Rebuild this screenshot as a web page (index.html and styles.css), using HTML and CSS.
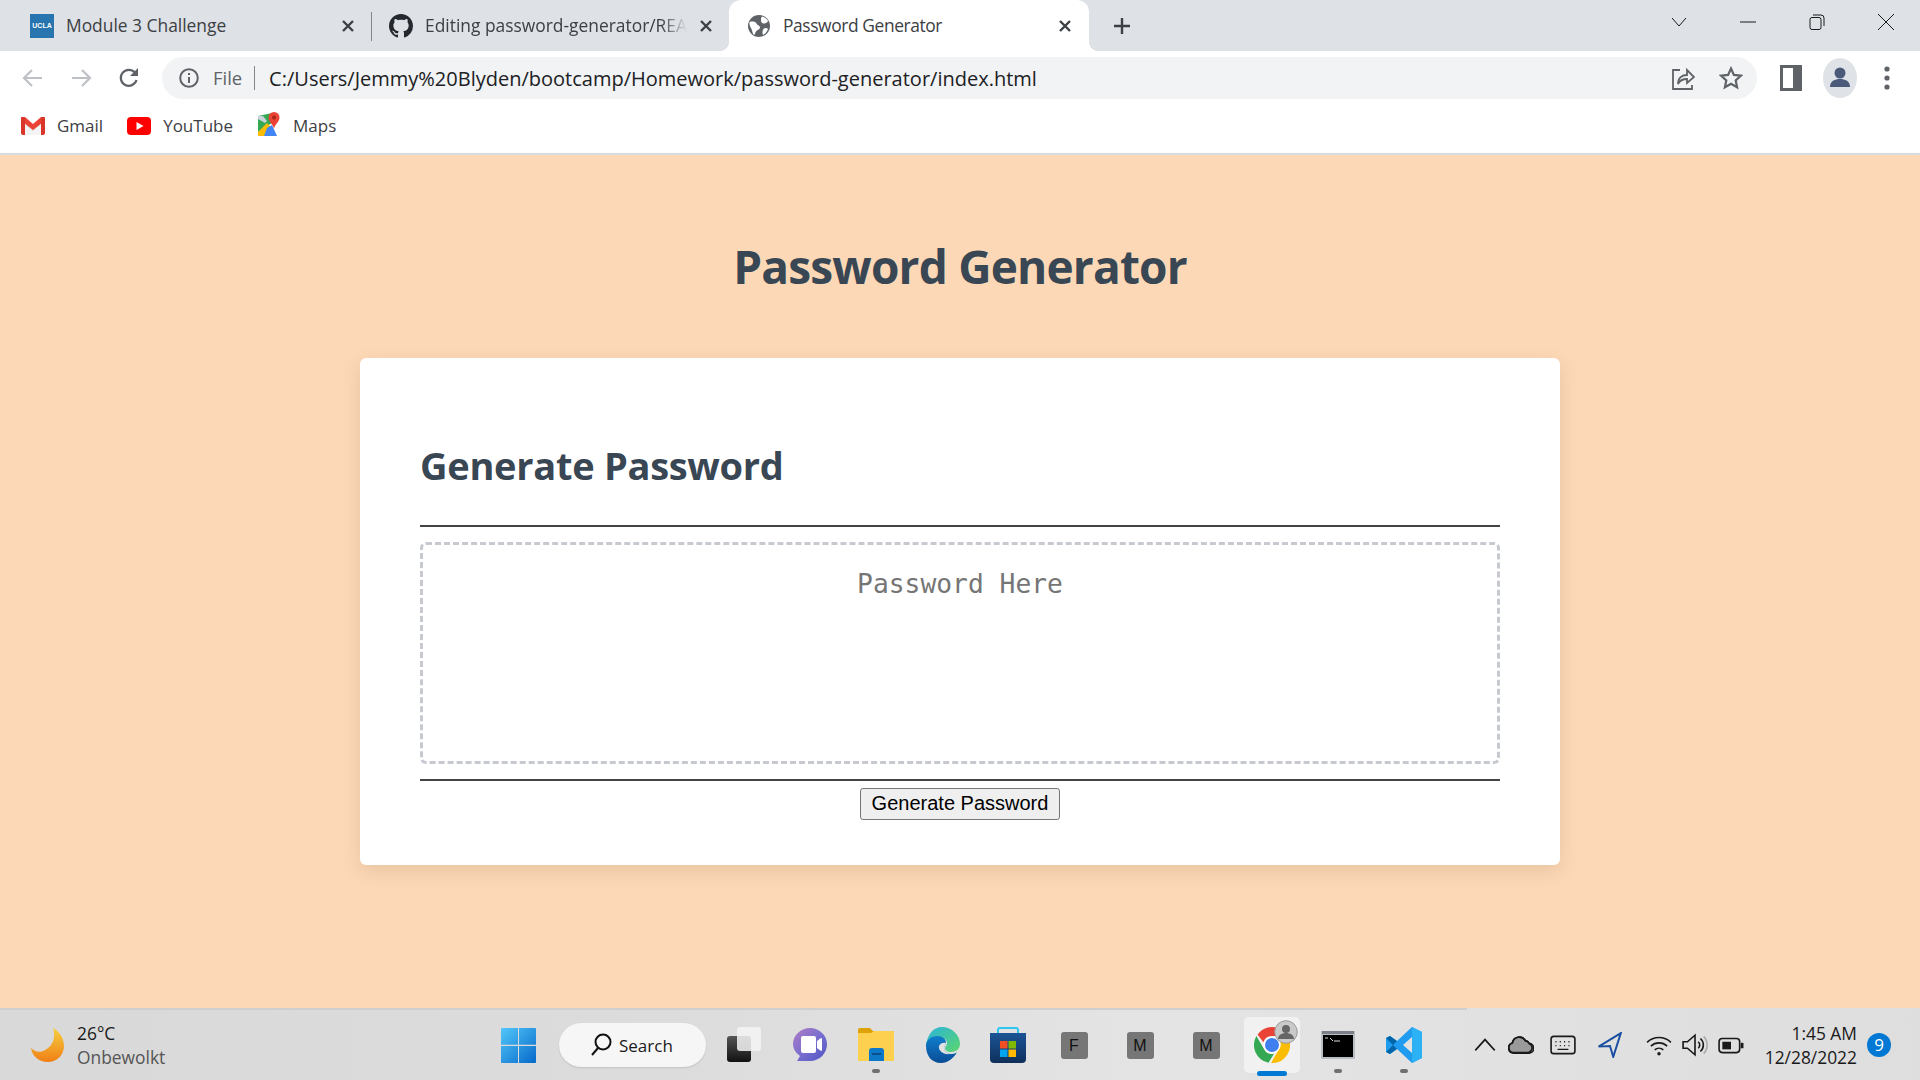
FILE: index.html
```html
<!DOCTYPE html>
<html lang="en">
<head>
<meta charset="utf-8">
<title>Password Generator</title>
<link rel="stylesheet" href="styles.css">
</head>
<body>
<div class="tabstrip">
  <div class="tab tab-first">
    <span class="ucla">UCLA</span>
    <span class="tab-title">Module 3 Challenge</span>
    <svg class="tab-close" viewBox="0 0 14 14"><path d="M2 2l10 10M12 2L2 12"/></svg>
  </div>
  <div class="tab tab-sep">
    <svg class="favicon" viewBox="0 0 16 16"><path fill="#24292f" d="M8 0C3.58 0 0 3.58 0 8c0 3.54 2.29 6.53 5.47 7.59.4.07.55-.17.55-.38 0-.19-.01-.82-.01-1.49-2.01.37-2.53-.49-2.69-.94-.09-.23-.48-.94-.82-1.13-.28-.15-.68-.52-.01-.53.63-.01 1.08.58 1.23.82.72 1.21 1.87.87 2.33.66.07-.52.28-.87.51-1.07-1.78-.2-3.64-.89-3.64-3.95 0-.87.31-1.59.82-2.15-.08-.2-.36-1.02.08-2.12 0 0 .67-.21 2.2.82.64-.18 1.32-.27 2-.27.68 0 1.36.09 2 .27 1.53-1.04 2.2-.82 2.2-.82.44 1.1.16 1.92.08 2.12.51.56.82 1.27.82 2.15 0 3.07-1.87 3.75-3.65 3.95.29.25.54.73.54 1.48 0 1.07-.01 1.93-.01 2.2 0 .21.15.46.55.38A8.013 8.013 0 0016 8c0-4.42-3.58-8-8-8z"/></svg>
    <span class="tab-title tab-fade">Editing password-generator/README.md</span>
    <svg class="tab-close" viewBox="0 0 14 14"><path d="M2 2l10 10M12 2L2 12"/></svg>
  </div>
  <div class="tab tab-active">
    <svg class="favicon" viewBox="0 0 24 24"><circle cx="12" cy="12" r="11" fill="#5f6368"/><path fill="#fff" d="M2.500 8c3-1 6-.5 7 1.500s3.500 2 3.500 4-3 2.500-4 4-1 3-2 3.500c-1.500-1-1.500-4-2.500-6S2 11 2.500 8zM15 2.500c3 .5 5 2.500 6 4.500-.5 1.500-2 2.500-4 2.500s-3-1-3-3 0-3 1-4zM17 14.500c1.500-1 3-.5 4 .5-1 3-3 5-5 6-1-2-.5-5 1-6.500z"/></svg>
    <span class="tab-title tab-title-active">Password Generator</span>
    <svg class="tab-close" viewBox="0 0 14 14"><path d="M2 2l10 10M12 2L2 12"/></svg>
  </div>
  <svg class="new-tab" viewBox="0 0 18 18"><path d="M9 1v16M1 9h16"/></svg>
  <div class="window-controls">
    <svg class="wc" viewBox="0 0 16 16"><path d="M1 4l7 8 7-8"/></svg>
    <svg class="wc" viewBox="0 0 16 16"><path d="M0 8h16"/></svg>
    <svg class="wc" viewBox="0 0 16 16"><rect x="1" y="3.500" width="11" height="12" rx="2"/><path d="M4 1h8a3 3 0 0 1 3 3v8"/></svg>
    <svg class="wc" viewBox="0 0 16 16"><path d="M0 0l16 16M16 0L0 16"/></svg>
  </div>
</div>

<div class="toolbar">
  <svg class="nav nav-off" viewBox="0 0 24 24"><path d="M21 12H4M11 4l-8 8 8 8"/></svg>
  <svg class="nav nav-off" viewBox="0 0 24 24"><path d="M3 12h17M13 4l8 8-8 8"/></svg>
  <svg class="nav" viewBox="0 0 24 24"><path d="M19.500 14a8 8 0 1 1-1.600-7.400"/><path class="solid" d="M21 2v8h-8z"/></svg>
  <div class="omnibox">
    <svg class="info" viewBox="0 0 22 22"><circle cx="11" cy="11" r="8.800"/><path d="M11 10v6"/><path d="M11 6v2"/></svg>
    <span class="file">File</span>
    <span class="url">C:/Users/Jemmy%20Blyden/bootcamp/Homework/password-generator/index.html</span>
    <svg class="omni-icon share" viewBox="0 0 24 24"><path d="M9 4H2v19h19v-4"/><path d="M7 18c0-6 4-9 9-9V4l7 7-7 6v-4c-4 0-7 1-9 5z"/></svg>
    <svg class="omni-icon star" viewBox="0 0 24 24"><path d="M12 2.500l2.900 6.400 6.900.8-5.100 4.700 1.400 6.900-6.100-3.500-6.100 3.500 1.400-6.900-5.100-4.700 6.900-.8z"/></svg>
  </div>
  <svg class="panel" viewBox="0 0 22 26"><path fill="#5f6368" d="M0 0h22v26H0z"/><path fill="#fff" d="M3 3h10v20H3z"/></svg>
  <svg class="avatar" viewBox="0 0 34 34"><ellipse cx="17" cy="17" rx="17" ry="20" fill="#dfe2e7"/><circle cx="17" cy="12" r="5.500" fill="#4a5a78"/><path fill="#4a5a78" d="M7 26c0-6 5-8 10-8s10 2 10 8z"/></svg>
  <svg class="menu" viewBox="0 0 6 26"><circle cx="3" cy="4" r="2.600"/><circle cx="3" cy="13" r="2.600"/><circle cx="3" cy="22" r="2.600"/></svg>
</div>

<div class="bookmarks">
  <div class="bookmark">
    <svg class="bm-icon" viewBox="0 0 24 18"><path fill="#f4f4f4" d="M4 3l8 7 8-7v15H4z"/><path fill="#d9d9d9" d="M4 6l8 7 8-7v1l-8 7-8-7z"/><path fill="#ea4335" d="M1 1l3-1 8 7 8-7 3 1-2 5-9 7-9-7z"/><path fill="#d8362a" d="M0 2a2 2 0 0 1 4-1v17H2a2 2 0 0 1-2-2zM24 2a2 2 0 0 0-4-1v17h2a2 2 0 0 0 2-2z"/></svg>
    <span>Gmail</span>
  </div>
  <div class="bookmark">
    <svg class="bm-icon" viewBox="0 0 24 18"><rect width="24" height="18" rx="4" fill="#f00"/><path fill="#fff" d="M9.500 5l7 4-7 4z"/></svg>
    <span>YouTube</span>
  </div>
  <div class="bookmark">
    <svg class="bm-icon maps" viewBox="0 0 24 24"><path fill="#35a853" d="M1 4l14-3v10L1 20z"/><path fill="#fbbc04" d="M1 20l9-9 6 6-9 7H1z"/><path fill="#4285f4" d="M10 16l5-3 5 11H7z"/><path fill="#c8d3dc" d="M1 4l5 0 4 5-2 2-7-4z"/><path fill="#ea4335" d="M17 0a5.500 5.500 0 0 1 5.500 5.500c0 4-4 6-5.500 11-1.500-5-5.500-7-5.500-11A5.500 5.500 0 0 1 17 0z"/><circle cx="17" cy="5.500" r="2" fill="#a52714"/></svg>
    <span>Maps</span>
  </div>
</div>

<main class="page">
  <h1 class="page-title">Password Generator</h1>
  <section class="card">
    <h2 class="card-title">Generate Password</h2>
    <div class="card-body">
      <textarea class="password" readonly placeholder="Password Here" aria-label="Generated Password"></textarea>
    </div>
    <div class="card-footer">
      <button class="generate" type="button">Generate Password</button>
    </div>
  </section>
</main>

<footer class="taskbar">
  <div class="weather">
    <svg class="moon" viewBox="0 0 33 34"><defs><linearGradient id="moonG" x1="0" y1="0" x2="0" y2="1"><stop offset="0" stop-color="#f6cf3f"/><stop offset="1" stop-color="#ef7f16"/></linearGradient></defs><path fill="url(#moonG)" d="M22 0c6 3 11 10 11 18 0 9-7 16-16 16C8 34 1 28 0 20c4 4 9 5 14 2 8-4 11-13 8-22z"/></svg>
    <div class="weather-text">
      <div class="temp">26°C</div>
      <div class="cond">Onbewolkt</div>
    </div>
  </div>
  <div class="app">
    <svg class="icon-win" viewBox="0 0 35 35"><defs><linearGradient id="winG" x1="0" y1="0" x2="1" y2="1"><stop offset="0" stop-color="#52c7fa"/><stop offset="1" stop-color="#0669c9"/></linearGradient></defs><path fill="url(#winG)" d="M1 0h16v16.700H0V1a1 1 0 0 1 1-1zM18 0h16a1 1 0 0 1 1 1v15.700H18zM0 18h17v17H1a1 1 0 0 1-1-1zM18 18h17v16a1 1 0 0 1-1 1H18z"/></svg>
  </div>
  <div class="search-pill">
    <svg class="search-icon" viewBox="0 0 22 24"><circle cx="13" cy="9" r="7.500"/><path d="M8 15l-6 7"/></svg>
    <span>Search</span>
  </div>
  <div class="apps">
    <div class="app">
      <svg class="icon-36" viewBox="0 0 36 36"><defs><linearGradient id="tvG" x1="0" y1="0" x2="0" y2="1"><stop offset="0" stop-color="#555"/><stop offset="1" stop-color="#111"/></linearGradient></defs><rect x="1" y="9" width="24" height="26" rx="3" fill="url(#tvG)"/><rect x="11" y="0" width="24" height="24" rx="3" fill="#f4f4f4" fill-opacity=".85"/></svg>
    </div>
    <div class="app">
      <svg class="icon-36" viewBox="0 0 36 36"><defs><linearGradient id="teamsG" x1="0" y1="0" x2="1" y2="1"><stop offset="0" stop-color="#b07cc6"/><stop offset=".5" stop-color="#7b6fcf"/><stop offset="1" stop-color="#4d55c4"/></linearGradient></defs><path fill="url(#teamsG)" d="M18 1c9 0 17 7 17 16s-7 17-17 17H5l3-5C4 26 1 22 1 17 1 8 9 1 18 1z"/><path fill="#fff" d="M9 11a2 2 0 0 1 2-2h11a2 2 0 0 1 2 2v13a2 2 0 0 1-2 2H11a2 2 0 0 1-2-2zM25 14l4-3a1 1 0 0 1 1 1v11a1 1 0 0 1-1 1l-4-3z"/></svg>
    </div>
    <div class="app app-open">
      <svg class="icon-36" viewBox="0 0 36 36"><path fill="#dea108" d="M0 3a2 2 0 0 1 2-2h10l3 3h21v10H0z"/><path fill="#fdd14f" d="M0 6h13l3-2h19a1 1 0 0 1 1 1v29H0z"/><path fill="#0e78c8" d="M11 24a3 3 0 0 1 3-3h9a3 3 0 0 1 3 3v10H11z"/><path fill="#0a4f8e" d="M14 26h9v2h-9z"/></svg>
    </div>
    <div class="app">
      <svg class="icon-36" viewBox="0 0 36 36"><defs><linearGradient id="edgeA" x1="0" y1="0" x2="1" y2="1"><stop offset="0" stop-color="#2bb4dc"/><stop offset="1" stop-color="#5bd66b"/></linearGradient><linearGradient id="edgeB" x1="0" y1="0" x2="0" y2="1"><stop offset="0" stop-color="#0f7fcc"/><stop offset="1" stop-color="#0b4c96"/></linearGradient></defs><path fill="url(#edgeA)" d="M18 0c10 0 18 8 18 17 0 5-4 8-9 8-4 0-6-2-6-4 0-1 2-2 2-5 0-4-4-6-8-6-6 0-11 4-13 9C3 8 9 0 18 0z"/><path fill="url(#edgeB)" d="M2 19c0-6 5-10 11-10 5 0 9 2 9 7 0 2-2 3-2 5 0 4 4 6 8 6 2 0 4-1 5-2-3 6-9 11-16 11C7 36 2 28 2 19z"/><path fill="#e2e2e2" d="M15 19c1-3 5-4 7-3 0 2-2 3-2 5 0 3 2 5 6 6-6 1-12-3-11-8z"/></svg>
    </div>
    <div class="app">
      <svg class="icon-36" viewBox="0 0 36 36"><defs><linearGradient id="storeG" x1="0" y1="0" x2="0" y2="1"><stop offset="0" stop-color="#1b5596"/><stop offset="1" stop-color="#0f2f5a"/></linearGradient></defs><path fill="none" stroke="#30c5f0" stroke-width="2" d="M8 8V3a2 2 0 0 1 2-2h16a2 2 0 0 1 2 2v5"/><path fill="url(#storeG)" d="M0 6h36v26a4 4 0 0 1-4 4H4a4 4 0 0 1-4-4z"/><path fill="#f25022" d="M10 14h7.500v7.500H10z"/><path fill="#7fba00" d="M18.500 14H26v7.500h-7.500z"/><path fill="#00a4ef" d="M10 22.500h7.500V30H10z"/><path fill="#ffb900" d="M18.500 22.500H26V30h-7.500z"/></svg>
    </div>
    <div class="app"><span class="tile">F</span></div>
    <div class="app"><span class="tile">M</span></div>
    <div class="app"><span class="tile">M</span></div>
    <div class="app app-active">
      <span class="chrome-box">
        <svg class="icon-36" viewBox="0 0 36 36"><path fill="#ea4335" d="M18 0a18 18 0 0 1 15.600 9H18a9 9 0 0 0-8.600 6.300L3.500 7.500A18 18 0 0 1 18 0z"/><path fill="#34a853" d="M2.400 9l7.800 13.500A9 9 0 0 0 20 26.800L14.500 35.700A18 18 0 0 1 2.400 9z"/><path fill="#fbbc04" d="M33.600 9A18 18 0 0 1 17 36l7.800-13.500A9 9 0 0 0 24.500 11.500z"/><circle cx="18" cy="18" r="8.500" fill="#fff"/><circle cx="18" cy="18" r="7" fill="#3f7ff0"/></svg>
        <svg class="chrome-badge" viewBox="0 0 24 24"><circle cx="12" cy="12" r="11.300" fill="#c9c9c9" stroke="#9a9a9a"/><circle cx="12" cy="9" r="4" fill="#666"/><path fill="#666" d="M4 19c0-4 4-6 8-6s8 2 8 6z"/></svg>
      </span>
    </div>
    <div class="app app-open">
      <svg class="icon-cmd" viewBox="0 0 34 28"><rect width="34" height="28" fill="#b9bdc4"/><rect x="1" y="0" width="32" height="3" fill="#7b8088"/><rect x="2" y="4" width="30" height="22" fill="#000"/><path stroke="#ddd" stroke-width="1" fill="none" d="M4 7h3M9 7l3 3M13 10h6"/></svg>
    </div>
    <div class="app app-open">
      <svg class="icon-36" viewBox="0 0 36 36"><path fill="#1f9cf0" d="M26 0l10 5v26l-10 5-15-14-7 5-4-2V11l4-2 7 5zM26 10l-9 8 9 8z"/><path fill="#0065a9" d="M0 11l4-2 7 5-4 4zM0 25l4 2 7-5-4-4z"/><path fill="#2db1f5" d="M26 0l10 5v26l-10 5z"/></svg>
    </div>
  </div>
  <div class="tray">
    <div class="tray-item"><svg class="tray-svg" viewBox="0 0 24 24"><path d="M3 17l9-10 9 10"/></svg></div>
    <div class="tray-item"><svg class="tray-svg" viewBox="0 0 24 24"><path fill="#9a9a9a" d="M5 19a4.500 4.500 0 0 1-1-8.800A6.500 6.500 0 0 1 16 8a5 5 0 0 1 3.500 2.500A4.500 4.500 0 0 1 19 19z"/><path d="M5 19.500a4.800 4.800 0 0 1-1-9.400A6.500 6.500 0 0 1 16 8a5 5 0 0 1 3.500 2.500A4.500 4.500 0 0 1 19 19.500z"/></svg></div>
    <div class="tray-item tray-kb"><svg class="tray-svg" viewBox="0 0 24 24"><rect x="1" y="4" width="22" height="16" rx="2.500"/><path class="thin" d="M5 9h1M9 9h1M13 9h1M17 9h1M5 12.500h1M9 12.500h1M13 12.500h1M17 12.500h1M7 16h10"/></svg></div>
    <div class="tray-item tray-loc"><svg class="tray-svg blue" viewBox="0 0 24 24"><path d="M22 1L1.500 13.500 12 13l3 10z"/></svg></div>
    <div class="tray-item tray-wifi"><svg class="tray-svg" viewBox="0 0 24 24"><path d="M1 9.500a16 16 0 0 1 22 0M4.500 13a11 11 0 0 1 15 0M8 16.500a6 6 0 0 1 8 0"/><circle class="solid" cx="12" cy="20" r="1.600"/></svg></div>
    <div class="tray-item"><svg class="tray-svg" viewBox="0 0 24 24"><path d="M1 9v6h4l7 6V3L5 9z"/><path d="M15 9a4 4 0 0 1 0 6M17 6a8 8 0 0 1 0 12"/><path class="faint" d="M20 4a11.500 11.500 0 0 1 0 16"/></svg></div>
    <div class="tray-item"><svg class="tray-svg" viewBox="0 0 24 24"><rect x="1" y="6" width="19" height="13" rx="3"/><path class="solid" d="M4 9h8v7H4z"/><path class="solid" d="M21 10h2.500v5H21z"/></svg></div>
  </div>
  <div class="clock">
    <div>1:45 AM</div>
    <div>12/28/2022</div>
  </div>
  <span class="notif">9</span>
</footer>
</body>
</html>
```

FILE: styles.css
```css
* { box-sizing: border-box; }
html, body { height: 100%; }
body {
  margin: 0;
  height: 100vh;
  overflow: hidden;
  display: flex;
  flex-direction: column;
  font-family: "Open Sans", "Noto Sans", sans-serif;
  background: #fcd8b6;
}

/* tab strip */
.tabstrip {
  height: 51px;
  flex: none;
  display: flex;
  align-items: center;
  padding-left: 11px;
  background: #dee1e6;
  color: #3c4043;
}
.tab {
  position: relative;
  width: 358px;
  height: 51px;
  display: flex;
  align-items: center;
  padding: 0 16px 0 18px;
}
.tab-first { width: 360px; padding-right: 16px; }
.tab-sep::before {
  content: "";
  position: absolute;
  left: 0;
  top: 12px;
  height: 29px;
  width: 1px;
  background: #80868b;
}
.tab-active {
  width: 360px;
  background: #fff;
  border-radius: 12px 12px 0 0;
  padding-right: 17px;
}
.tab-active::before, .tab-active::after {
  content: "";
  position: absolute;
  bottom: 0;
  width: 10px;
  height: 10px;
}
.tab-active::before { left: -10px; background: radial-gradient(circle at 0 0, transparent 10px, #fff 10.5px); }
.tab-active::after { right: -10px; background: radial-gradient(circle at 100% 0, transparent 10px, #fff 10.5px); }
.ucla {
  width: 24px;
  height: 24px;
  margin-left: 1px;
  flex: none;
  background: #2774ae;
  color: #fff;
  font: 700 7px/24px "Liberation Sans", sans-serif;
  text-align: center;
}
.favicon { width: 24px; height: 24px; flex: none; }
.tab-title {
  flex: 1;
  min-width: 0;
  margin-left: 12px;
  padding-bottom: 2px;
  font-size: 17.4px;
  white-space: nowrap;
  overflow: hidden;
}
.tab-title-active { letter-spacing: -0.4px; }
.tab-fade {
  margin-right: 12px;
  -webkit-mask-image: linear-gradient(90deg, #000 90%, transparent 100%);
  mask-image: linear-gradient(90deg, #000 90%, transparent 100%);
}
.tab-close {
  width: 14px;
  height: 14px;
  flex: none;
  fill: none;
  stroke: #3c4043;
  stroke-width: 2.4;
}
.new-tab {
  width: 18px;
  height: 18px;
  margin-left: 24px;
  fill: none;
  stroke: #3c4043;
  stroke-width: 2.4;
}
.window-controls {
  margin-left: auto;
  display: flex;
  gap: 53px;
  padding: 0 26px 8px 0;
}
.wc {
  width: 16px;
  height: 16px;
  fill: none;
  stroke: #1a1a1a;
  stroke-width: 1;
}

/* toolbar */
.toolbar {
  height: 51px;
  flex: none;
  display: flex;
  align-items: center;
  background: #fff;
  padding: 3px 0 0 21px;
}
.nav {
  width: 24px;
  height: 24px;
  margin-right: 24px;
  flex: none;
  fill: none;
  stroke: #5f6368;
  stroke-width: 2.2;
}
.nav-off { stroke: #bdc1c6; }
.nav .solid { fill: #5f6368; stroke: none; }
.omnibox {
  width: 1595px;
  height: 42px;
  margin-left: -3px;
  flex: none;
  display: flex;
  align-items: center;
  background: #f1f3f4;
  border-radius: 21px;
  padding: 0 14px 0 16px;
  color: #202124;
}
.info {
  width: 22px;
  height: 22px;
  flex: none;
  fill: none;
  stroke: #5f6368;
  stroke-width: 2;
}
.file {
  margin-left: 13px;
  padding-right: 12px;
  font-size: 18.4px;
  line-height: 24px;
  color: #5f6368;
  border-right: 1px solid #80868b;
}
.url {
  margin-left: 14px;
  font-size: 20px;
  white-space: nowrap;
}
.omni-icon {
  width: 24px;
  height: 24px;
  flex: none;
  fill: none;
  stroke: #5f6368;
  stroke-width: 1.8;
}
.share { margin-left: auto; }
.star { margin-left: 24px; stroke-width: 2.2; }
.panel { width: 22px; height: 26px; margin-left: 23px; flex: none; }
.avatar { width: 34px; height: 34px; margin-left: 21px; flex: none; overflow: visible; }
.menu { width: 6px; height: 26px; margin-left: 27px; flex: none; fill: #5f6368; }

/* bookmarks */
.bookmarks {
  height: 53px;
  flex: none;
  display: flex;
  align-items: center;
  gap: 24px;
  padding: 0 0 4px 21px;
  background: #fff;
  border-bottom: 2px solid #dadce0;
  color: #3c4043;
  font-size: 17px;
}
.bookmark { display: flex; align-items: center; gap: 12px; }
.bm-icon { width: 24px; height: 18px; flex: none; }
.maps { height: 24px; margin-top: -4px; }

/* page */
.page {
  flex: 1;
  min-height: 0;
  display: flex;
  flex-direction: column;
  align-items: center;
  background: #fcd8b6;
}
.page-title {
  margin: 78px 0 0;
  height: 125px;
  font-size: 46px;
  letter-spacing: -0.8px;
  line-height: 66px;
  font-weight: 700;
  color: #394653;
}
.card {
  width: 1200px;
  height: 507px;
  padding: 0 60px;
  background: #fff;
  border-radius: 6px;
  box-shadow: 0 6px 18px rgba(120, 80, 40, .14);
}
.card-title {
  margin: 0;
  height: 169px;
  padding-top: 77px;
  font-size: 38px;
  letter-spacing: -0.28px;
  line-height: 60px;
  font-weight: 700;
  color: #394653;
  border-bottom: 2px solid #444;
}
.card-body {
  padding: 15px 0;
  border-bottom: 2px solid #444;
}
.password {
  display: block;
  width: 100%;
  height: 222px;
  padding: 24px;
  border: 3px dashed #c6cad0;
  border-radius: 6px;
  background: #fff;
  font-family: "DejaVu Sans Mono", monospace;
  font-size: 26.3px;
  text-align: center;
  resize: none;
  outline: none;
}
.password::placeholder { color: #757575; }
.card-footer {
  display: flex;
  justify-content: center;
  padding-top: 7px;
}
.generate {
  width: 200px;
  height: 32px;
  padding: 0 0 2px;
  border: 1px solid #767676;
  border-radius: 3px;
  background: #efefef;
  color: #000;
  font: 20px "Liberation Sans", sans-serif;
}

/* taskbar */
.taskbar {
  position: relative;
  height: 72px;
  flex: none;
  display: flex;
  align-items: center;
  padding: 2px 29px 0 31px;
  background: linear-gradient(90deg, #d9d9d9 0%, #dcdcdc 35%, #e4e4e4 60%, #dedede 100%);
  color: #1a1a1a;
}
.taskbar::before {
  content: "";
  position: absolute;
  left: 0;
  top: 0;
  width: 1467px;
  height: 2px;
  background: #cfcfcf;
}
.weather { width: 454px; display: flex; align-items: center; gap: 13px; flex: none; }
.moon { width: 33px; height: 34px; flex: none; }
.temp { font-size: 17.4px; line-height: 24px; }
.cond { font-size: 17.4px; line-height: 24px; color: #555; }
.app {
  position: relative;
  width: 66px;
  height: 70px;
  flex: none;
  display: flex;
  align-items: center;
  justify-content: center;
}
.app-open::after {
  content: "";
  position: absolute;
  left: 29px;
  bottom: 7px;
  width: 8px;
  height: 4px;
  border-radius: 2px;
  background: #707070;
}
.app-active::before {
  content: "";
  position: absolute;
  left: 5px;
  top: 7px;
  width: 56px;
  height: 56px;
  border-radius: 5px;
  background: #f1f1f1;
}
.app-active::after {
  content: "";
  position: absolute;
  left: 18px;
  bottom: 4px;
  width: 30px;
  height: 5px;
  border-radius: 3px;
  background: #0078d4;
}
.icon-win { width: 35px; height: 35px; }
.icon-36 { width: 36px; height: 36px; display: block; }
.icon-cmd { width: 34px; height: 28px; }
.chrome-box { position: relative; display: block; width: 36px; height: 36px; }
.chrome-badge {
  position: absolute;
  right: -8px;
  top: -7px;
  width: 24px;
  height: 24px;
}
.tile {
  width: 27px;
  height: 27px;
  border-radius: 3px;
  background: #767676;
  color: #111;
  font: 16px/27px "Liberation Sans", sans-serif;
  text-align: center;
}
.search-pill {
  width: 147px;
  height: 44px;
  margin: 0 5px 0 8px;
  flex: none;
  display: flex;
  align-items: center;
  gap: 7px;
  padding-left: 31px;
  border-radius: 22px;
  background: #f6f6f6;
  box-shadow: 0 1px 2px rgba(0, 0, 0, .12);
  font-size: 17px;
}
.search-icon {
  width: 22px;
  height: 24px;
  flex: none;
  fill: none;
  stroke: #111;
  stroke-width: 2;
}
.apps { display: flex; flex: none; }
.tray { margin-left: 30px; display: flex; flex: none; }
.tray-item { width: 36px; display: flex; justify-content: center; flex: none; }
.tray-kb { margin-left: 6px; }
.tray-loc { margin-left: 11px; }
.tray-wifi { margin-left: 13px; }
.tray-svg {
  width: 26px;
  height: 26px;
  fill: none;
  stroke: #1a1a1a;
  stroke-width: 1.5;
}
.tray-svg .solid { fill: #1a1a1a; stroke: none; }
.tray-svg .thin { stroke-width: 1.2; stroke-dasharray: none; }
.tray-svg .faint { stroke: #aaa; }
.tray-svg.blue { stroke: #1a4ea0; stroke-width: 1.8; }
.clock {
  margin-left: auto;
  text-align: right;
  font-size: 17.4px;
  line-height: 24px;
}
.notif {
  width: 24px;
  height: 24px;
  margin-left: 10px;
  flex: none;
  border-radius: 50%;
  background: #0078d4;
  color: #fff;
  font-size: 17px;
  line-height: 24px;
  text-align: center;
}
```
